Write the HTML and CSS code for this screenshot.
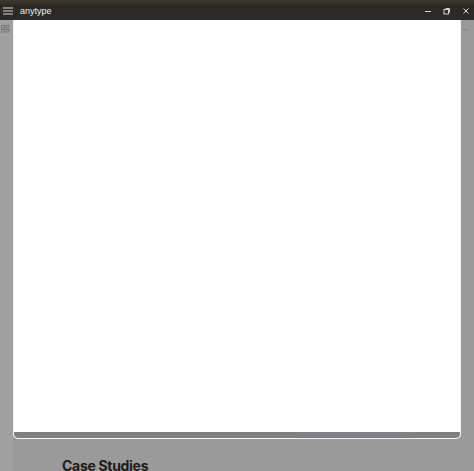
FILE: index.html
```html
<!DOCTYPE html>
<html>
<head>
<meta charset="utf-8">
<link rel="stylesheet" href="styles.css">
</head>
<body>
<div class="app">
  <header class="titlebar">
    <div class="tb-left">
      <svg class="menu" width="10" height="8" viewBox="0 0 10 8"><path d="M0 1h10M0 4h10M0 7h10" stroke="#d8d8d8" stroke-width="1.2"/></svg>
      <span class="title">anytype</span>
    </div>
    <div class="tb-right">
      <svg width="8" height="8" viewBox="0 0 8 8"><path d="M1 4.5h6" stroke="#d0d0d0" stroke-width="1"/></svg>
      <svg width="8" height="8" viewBox="0 0 8 8"><rect x="1" y="2.5" width="4.5" height="4.5" fill="none" stroke="#d0d0d0" stroke-width="1"/><path d="M2.5 1.5h4v4" fill="none" stroke="#d0d0d0" stroke-width="1"/></svg>
      <svg width="8" height="8" viewBox="0 0 8 8"><path d="M1.5 1.5l5 5M6.5 1.5l-5 5" stroke="#d8d8d8" stroke-width="1"/></svg>
    </div>
  </header>
  <main class="page">
    <aside class="side">
      <svg width="10" height="8" viewBox="0 0 10 8"><g fill="none" stroke="#6f6f6f" stroke-width="0.8"><rect x="0.5" y="0.5" width="3" height="2.5"/><rect x="5" y="0.5" width="3" height="2.5"/><rect x="0.5" y="4.5" width="3" height="2.5"/><rect x="5" y="4.5" width="3" height="2.5"/></g></svg>
    </aside>
    <section class="content">
      <h1 class="heading">Case Studies</h1>
    </section>
    <div class="more">···</div>
  </main>
  <div class="modal">
    <div class="modal-body"></div>
    <div class="modal-foot"><span class="foot-line"></span></div>
  </div>
</div>
</body>
</html>
```
FILE: styles.css
```css
html, body {
  margin: 0;
  padding: 0;
}
body {
  width: 474px;
  height: 471px;
  overflow: hidden;
  background: #9b9b9b;
  font-family: Inter, "Liberation Sans", sans-serif;
}
.app {
  position: relative;
  width: 474px;
  height: 471px;
  display: flex;
  flex-direction: column;
}
.titlebar {
  height: 20px;
  flex: none;
  display: flex;
  align-items: center;
  justify-content: space-between;
  background: linear-gradient(to bottom, #3a3a30 0, #33322c 4px, #2b2a27 5px, #2b2a27 100%);
  padding: 2px 4px 0 3px;
  box-sizing: border-box;
}
.tb-left {
  display: flex;
  align-items: center;
  gap: 7px;
}
.menu {
  display: block;
}
.title {
  color: #f0f0f0;
  font-family: "Liberation Sans", Inter, sans-serif;
  font-size: 9px;
  line-height: 12px;
}
.tb-right {
  display: flex;
  align-items: center;
  gap: 11px;
}
.tb-right svg {
  display: block;
}
.page {
  flex: 1;
  display: flex;
  background: #9a9a9a;
}
.side {
  width: 13px;
  flex: none;
  background: #a0a0a0;
  padding-top: 5px;
  box-sizing: border-box;
}
.side svg {
  display: block;
  margin-left: 1px;
}
.content {
  flex: 1;
  display: flex;
  flex-direction: column;
  justify-content: flex-end;
  padding-left: 49px;
}
.heading {
  margin: 0 0 -3px;
  font-size: 14px;
  line-height: 17px;
  font-weight: 700;
  color: #1c1c1c;
  letter-spacing: -0.3px;
}
.more {
  width: 12px;
  color: #707070;
  font-size: 9px;
  padding-top: 4px;
  letter-spacing: -1px;
}
.modal {
  position: absolute;
  left: 13px;
  top: 20px;
  width: 448px;
  height: 419px;
  display: flex;
  flex-direction: column;
  background: #ffffff;
  border-radius: 0 0 5px 5px;
  border: 1px solid #f4f4f4;
  border-top: none;
  box-sizing: border-box;
  overflow: hidden;
}
.modal-body {
  flex: 1;
  background: #ffffff;
}
.modal-foot {
  height: 6px;
  flex: none;
  background: #808080;
  position: relative;
  border-radius: 0 0 4px 4px;
}
.foot-line {
  position: absolute;
  left: 282px;
  width: 117px;
  bottom: 0;
  height: 1px;
  background: #6f7a8a;
}
```
